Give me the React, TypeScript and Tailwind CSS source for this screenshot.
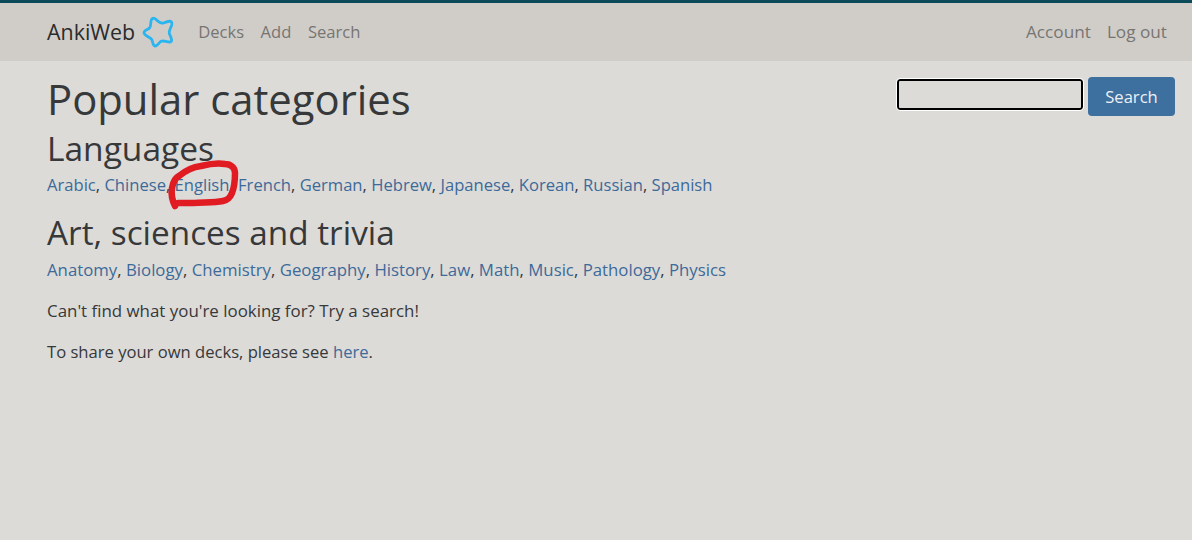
const linkClass = 'text-[#3d6a99]';

const languages = ['Arabic', 'Chinese', 'English', 'French', 'German', 'Hebrew', 'Japanese', 'Korean', 'Russian', 'Spanish'];
const topics = ['Anatomy', 'Biology', 'Chemistry', 'Geography', 'History', 'Law', 'Math', 'Music', 'Pathology', 'Physics'];

function LinkList({ items, size }: { items: string[]; size: string }) {
  return (
    <p className={`${size} leading-[26px]`}>
      {items.map((item, i) => (
        <span key={item}>
          <a className={linkClass}>{item}</a>
          {i < items.length - 1 && ', '}
        </span>
      ))}
    </p>
  );
}

export default function App() {
  return (
    <div className="min-h-[540px] bg-[#dcdbd8] font-['Open_Sans',sans-serif] text-[#36383a] relative overflow-hidden">
      <div className="h-[3px] bg-[#0b4a58]" />
      {/* Navbar */}
      <div className="h-[58px] bg-[#d0cdc9] flex items-center justify-between pl-[47px] pr-[25px]">
        <div className="flex items-center">
          <span className="text-[21.4px] text-[#2b2b2b]">AnkiWeb</span>
          <svg className="ml-[6px] w-[34px] h-[34px]" viewBox="0 0 34 34" fill="none" stroke="#2bb5f0" strokeWidth="2.8" strokeLinejoin="round">
            <path d="M9.8 8 C10 3 12.5 2 15 4.5 C17.5 7 19.5 8.8 22.5 8 C26.5 6.3 31.5 4.5 30.8 9.5 C30.2 13 27.3 15.5 28.3 18.5 C29.8 22 32.5 27 28.5 27 C25.5 27 22.5 25.2 20 26.3 C18 27.5 16.5 31.3 14 31 C11.8 30.7 11.8 26.5 10.7 24.5 C9.2 22 2.5 20.5 3 17.5 C3.4 15 7 14.7 8.5 13 C9.5 12 9.7 10 9.8 8 Z" />
          </svg>
          <nav className="ml-[23px] flex gap-[16.5px] text-[16.6px] text-[#777572]">
            <a>Decks</a>
            <a>Add</a>
            <a>Search</a>
          </nav>
        </div>
        <nav className="flex gap-[16px] text-[17.2px] text-[#777572]">
          <a>Account</a>
          <a>Log out</a>
        </nav>
      </div>

      {/* Content */}
      <div className="pl-[47px] pr-[17px] flex justify-between">
        <div>
          <h1 className="text-[41.8px] leading-[54px] mt-[11px]">Popular categories</h1>
          <h2 className="text-[33.5px] leading-[43px] mt-[1px]">Languages</h2>
          <div className="mt-[2px]">
            <LinkList items={languages} size="text-[16.6px]" />
          </div>
          <h2 className="text-[33.3px] leading-[43px] mt-[13px]">Art, sciences and trivia</h2>
          <div className="mt-[3px]">
            <LinkList items={topics} size="text-[16.8px]" />
          </div>
          <p className="text-[16.9px] leading-[26px] mt-[15px]">Can't find what you're looking for? Try a search!</p>
          <p className="text-[16.6px] leading-[26px] mt-[15px]">
            To share your own decks, please see <a className={linkClass}>here</a>.
          </p>
        </div>
        <div className="flex items-start gap-[5px] mt-[16px]">
          <input className="mt-[2px] w-[186px] h-[31px] rounded-[3px] border-2 border-black outline outline-1 outline-white bg-[#dcdbd8]" />
          <button className="w-[87px] h-[39px] pt-[2px] rounded-[4px] bg-[#3d6f9f] text-[#eef1f4] text-[16.6px]">Search</button>
        </div>
      </div>

      {/* Red hand-drawn circle */}
      <svg className="absolute left-[165px] top-[158px] w-[76px] h-[54px]" viewBox="0 0 76 54" fill="none" stroke="#e01b22" strokeWidth="6.5" strokeLinecap="round" strokeLinejoin="round">
        <path d="M10 48 C7 42 6 36 7 30 C8 24 10 20 14 18 C20 13 28 9 36 8 C44 6 54 5 60 6 C66 6 70 10 70 15 C70 22 69 30 67 35 C65 40 63 42 58 43 C48 45 38 44 28 45 C22 45 17 45 13 45" />
      </svg>
    </div>
  );
}
